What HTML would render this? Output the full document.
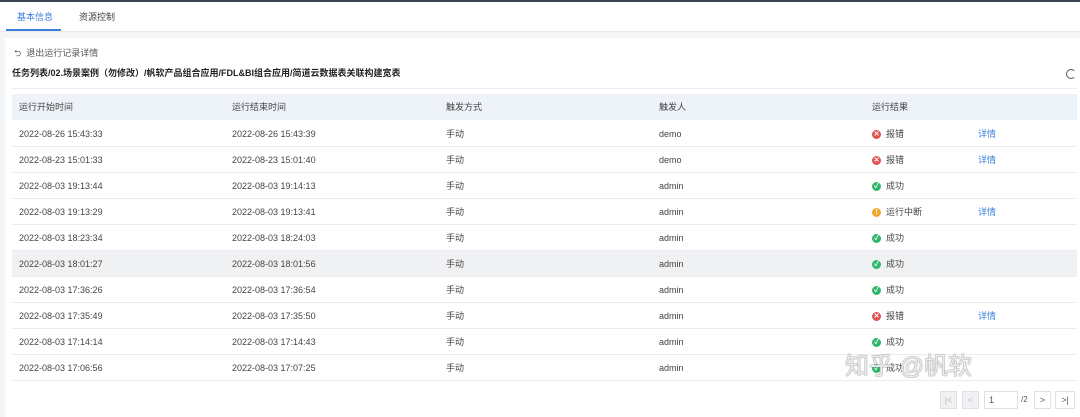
<!DOCTYPE html>
<html><head><meta charset="utf-8"><style>
*{margin:0;padding:0;box-sizing:border-box}
body{width:1080px;height:417px;overflow:hidden;background:#f4f5f7;font-family:"Liberation Sans","Noto Sans CJK SC",sans-serif;font-size:9px;color:#444;position:relative}
.top{position:absolute;left:0;top:0;width:1080px;height:2px;background:#3c4250}
.tabs{position:absolute;left:0;top:2px;width:1080px;height:30px;background:#fff;border-bottom:1px solid #e6e9ee}
.tab{position:absolute;top:0;line-height:30px;font-size:9px}
.card{position:absolute;left:5px;top:38px;width:1075px;height:379px;background:#fff}
.abs{position:absolute}
.row{position:absolute;left:12px;width:1065px;height:26px;border-bottom:1px solid #e9edf2}
.row span{position:absolute;top:0;line-height:26px;height:26px}
.ic{display:inline-block;width:9px;height:9px;border-radius:50%;color:#fff;font-size:7px;line-height:9px;text-align:center;margin-right:5px;vertical-align:middle;font-weight:bold;font-style:normal}
.pg{position:absolute;top:391px;height:18px;border:1px solid #dde1e7;background:#fff;font-size:9px;text-align:center;line-height:16px;color:#555}
</style></head><body>
<div class="top"></div>
<div class="tabs">
<div class="tab" style="left:17px;color:#3a7fd8">基本信息</div>
<div class="abs" style="left:6px;top:27px;width:55px;height:2px;background:#3a7fd8"></div>
<div class="tab" style="left:79px">资源控制</div>
</div>
<div class="card"></div>
<div class="abs" style="left:14px;top:46px;line-height:14px;font-size:9px;color:#555">⮌ &nbsp;退出运行记录详情</div>
<div class="abs" style="left:12px;top:66px;line-height:14px;font-weight:bold;font-size:9px;color:#222">任务列表/02.场景案例（勿修改）/帆软产品组合应用/FDL&amp;BI组合应用/简道云数据表关联构建宽表</div>
<div class="abs" style="left:1066px;top:69px;width:10px;height:10px;border:1.5px solid #555;border-radius:50%;border-right-color:transparent"></div>
<div class="abs" style="left:12px;top:88px;width:1065px;height:1px;background:#eceef2"></div>
<div class="row" style="top:94px;background:#eef3fa;border:none"><span style="left:7px">运行开始时间</span><span style="left:220px">运行结束时间</span><span style="left:434px">触发方式</span><span style="left:647px">触发人</span><span style="left:860px">运行结果</span></div>
<div id="rows"></div>
<script>
var d=[["2022-08-26 15:43:33","2022-08-26 15:43:39","demo",0],["2022-08-23 15:01:33","2022-08-23 15:01:40","demo",0],["2022-08-03 19:13:44","2022-08-03 19:14:13","admin",1],["2022-08-03 19:13:29","2022-08-03 19:13:41","admin",2],["2022-08-03 18:23:34","2022-08-03 18:24:03","admin",1],["2022-08-03 18:01:27","2022-08-03 18:01:56","admin",1],["2022-08-03 17:36:26","2022-08-03 17:36:54","admin",1],["2022-08-03 17:35:49","2022-08-03 17:35:50","admin",0],["2022-08-03 17:14:14","2022-08-03 17:14:43","admin",1],["2022-08-03 17:06:56","2022-08-03 17:07:25","admin",1]];
var st=[['#e05252','✕','报错'],['#2fb86b','✓','成功'],['#f0a830','!','运行中断']];
var h='';d.forEach(function(r,i){var s=st[r[3]];h+='<div class="row" style="top:'+(121+i*26)+'px;'+(i==5?'background:#f0f1f3':'')+'"><span style="left:7px">'+r[0]+'</span><span style="left:220px">'+r[1]+'</span><span style="left:434px">手动</span><span style="left:647px">'+r[2]+'</span><span style="left:860px"><i class="ic" style="background:'+s[0]+'">'+s[1]+'</i>'+s[2]+'</span>'+(r[3]!=1?'<span style="left:966px;color:#3a7fd8">详情</span>':'')+'</div>'});
document.getElementById('rows').innerHTML=h;
</script>
<div class="pg" style="left:940px;width:17px;color:#bbb;background:#f0f1f3">|&lt;</div>
<div class="pg" style="left:962px;width:17px;color:#bbb;background:#f0f1f3">&lt;</div>
<div class="pg" style="left:984px;width:34px;text-align:left;padding-left:4px">1</div>
<div class="abs" style="left:1021px;top:395px;font-size:8px;color:#555">/2</div>
<div class="pg" style="left:1034px;width:17px">&gt;</div>
<div class="pg" style="left:1055px;width:20px">&gt;|</div>
<div class="abs" style="left:845px;top:352px;line-height:30px;font-size:24px;color:rgba(255,255,255,0.85);text-shadow:0 0 1px #777,0 0 1px #777">知乎 @帆软</div>
</body></html>
